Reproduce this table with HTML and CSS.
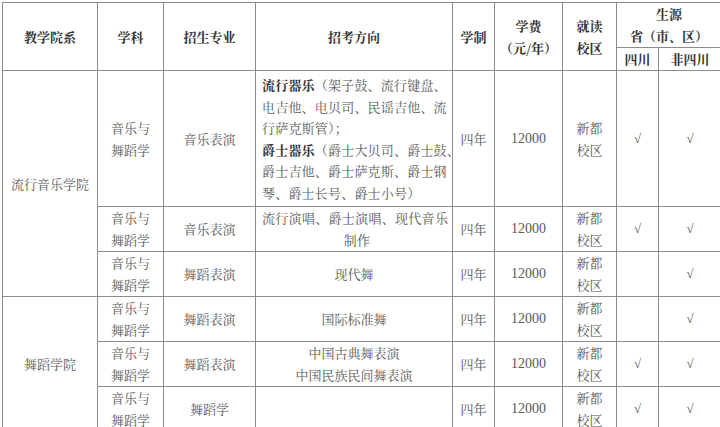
FILE: index.html
```html
<!DOCTYPE html>
<html lang="zh-CN">
<head>
<meta charset="utf-8">
<title>招生计划</title>
<link rel="stylesheet" href="styles.css">
</head>
<body>
<table class="plan">
  <colgroup>
    <col class="c-school"><col class="c-subject"><col class="c-major"><col class="c-dir">
    <col class="c-years"><col class="c-fee"><col class="c-campus"><col class="c-sc"><col class="c-nsc">
  </colgroup>
  <thead>
    <tr class="h1">
      <th rowspan="2">教学院系</th>
      <th rowspan="2">学科</th>
      <th rowspan="2">招生专业</th>
      <th rowspan="2">招考方向</th>
      <th rowspan="2">学制</th>
      <th rowspan="2">学费<br>（元/年）</th>
      <th rowspan="2">就读<br>校区</th>
      <th colspan="2">生源<br>省（市、区）</th>
    </tr>
    <tr class="h2">
      <th>四川</th>
      <th>非四川</th>
    </tr>
  </thead>
  <tbody>
    <tr class="r-tall">
      <td rowspan="3">流行音乐学院</td>
      <td>音乐与<br>舞蹈学</td>
      <td>音乐表演</td>
      <td class="dir"><b>流行器乐</b>（架子鼓、流行键盘、<br>电吉他、电贝司、民谣吉他、流<br>行萨克斯管）；<br><b>爵士器乐</b>（爵士大贝司、爵士鼓、<br>爵士吉他、爵士萨克斯、爵士钢<br>琴、爵士长号、爵士小号）</td>
      <td>四年</td>
      <td class="num">12000</td>
      <td>新都<br>校区</td>
      <td class="ck">√</td>
      <td class="ck">√</td>
    </tr>
    <tr class="r-2">
      <td>音乐与<br>舞蹈学</td>
      <td>音乐表演</td>
      <td class="dir2">流行演唱、爵士演唱、现代音乐<br><span class="mid">制作</span></td>
      <td>四年</td>
      <td class="num">12000</td>
      <td>新都<br>校区</td>
      <td class="ck">√</td>
      <td class="ck">√</td>
    </tr>
    <tr class="r-3">
      <td>音乐与<br>舞蹈学</td>
      <td>舞蹈表演</td>
      <td>现代舞</td>
      <td>四年</td>
      <td class="num">12000</td>
      <td>新都<br>校区</td>
      <td class="ck"></td>
      <td class="ck">√</td>
    </tr>
    <tr class="r-3">
      <td rowspan="3">舞蹈学院</td>
      <td>音乐与<br>舞蹈学</td>
      <td>舞蹈表演</td>
      <td>国际标准舞</td>
      <td>四年</td>
      <td class="num">12000</td>
      <td>新都<br>校区</td>
      <td class="ck"></td>
      <td class="ck">√</td>
    </tr>
    <tr class="r-3">
      <td>音乐与<br>舞蹈学</td>
      <td>舞蹈表演</td>
      <td>中国古典舞表演<br>中国民族民间舞表演</td>
      <td>四年</td>
      <td class="num">12000</td>
      <td>新都<br>校区</td>
      <td class="ck">√</td>
      <td class="ck">√</td>
    </tr>
    <tr class="r-3">
      <td>音乐与<br>舞蹈学</td>
      <td>舞蹈学</td>
      <td></td>
      <td>四年</td>
      <td class="num">12000</td>
      <td>新都<br>校区</td>
      <td class="ck">√</td>
      <td class="ck">√</td>
    </tr>
  </tbody>
</table>
</body>
</html>
```

FILE: styles.css
```css
html, body {
  margin: 0;
  padding: 0;
  background: #ffffff;
  overflow: hidden;
}

body {
  padding: 2px 0 0 2px;
  font-family: "Noto Serif CJK SC", "Noto Sans CJK SC", serif;
  color: #5a5a5a;
}

.plan {
  border-collapse: collapse;
  table-layout: fixed;
  width: 719px;
  font-size: 13px;
  line-height: 22px;
}

.c-school { width: 95px; }
.c-subject { width: 66px; }
.c-major { width: 92px; }
.c-dir { width: 197px; }
.c-years { width: 42px; }
.c-fee { width: 68px; }
.c-campus { width: 54px; }
.c-sc { width: 42px; }
.c-nsc { width: 63px; }

.plan th,
.plan td {
  border: 1px solid #8c8c8c;
  text-align: center;
  vertical-align: middle;
  padding: 0;
  font-weight: 400;
}

.plan th {
  color: #333333;
  font-weight: 700;
}

.h1 { height: 45px; }
.h2 { height: 22px; }

.r-tall { height: 136px; }
.r-2 { height: 43px; }
.r-3 { height: 45px; }

.plan td.dir {
  text-align: left;
  white-space: nowrap;
  padding: 0 0 0 6px;
  letter-spacing: 0.2px;
  line-height: 21.5px;
}

.plan td.dir b {
  color: #333333;
  font-weight: 700;
}

.plan td.dir2 {
  text-align: left;
  white-space: nowrap;
  padding-left: 6px;
  letter-spacing: 0.3px;
}

.mid {
  display: block;
  text-align: center;
}

.num {
  font-family: "Liberation Serif", serif;
  font-size: 14px;
}

.ck {
  font-family: "Liberation Serif", serif;
  font-size: 13px;
  color: #555555;
}
```
